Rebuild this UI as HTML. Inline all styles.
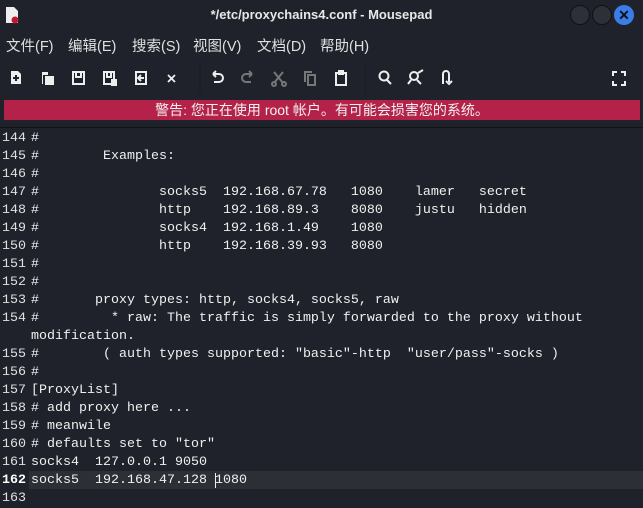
<!DOCTYPE html>
<html><head><meta charset="utf-8"><style>
*{margin:0;padding:0;box-sizing:border-box}
body{width:643px;height:508px;background:#1f222a;overflow:hidden;position:relative;font-family:"Liberation Sans","Noto Sans CJK SC",sans-serif;color:#e6e6e6}
.title{position:absolute;top:0;left:0;width:643px;height:30px;text-align:center;line-height:29px;font-size:13px;font-weight:bold;color:#e8e8e8}
.menu span{position:absolute;top:35px;font-size:14.5px;color:#e0e0e0}
.tb{position:absolute;top:60px;left:0;width:643px;height:36px}
.banner{position:absolute;top:100px;left:4px;width:636px;height:20px;background:#b42249;color:#f2f2f2;font-size:14px;text-align:center;line-height:20px}
.ed{position:absolute;top:127px;left:0;width:643px;height:381px;border-top:1px solid #101216;font-family:"Liberation Mono",monospace;font-size:13.33px}
.l{position:absolute;left:0;height:18px;line-height:19px;white-space:pre;width:643px}
.n{position:absolute;left:2px;color:#e0e0e0}
.t{position:absolute;left:31px;color:#f0f0f0}
.cur{background:#2c2f35;left:29px}
</style></head><body>
<div class="title">*/etc/proxychains4.conf - Mousepad</div>
<svg style="position:absolute;left:4px;top:6px" width="16" height="18"><path d="M2 1h8l4 4v12H2z" fill="#eee"/><circle cx="11" cy="14" r="3.5" fill="#c0182c"/></svg>
<div style="position:absolute;left:570px;top:5px;width:20px;height:20px;border-radius:50%;background:#2d3038;border:1px solid #111"></div>
<div style="position:absolute;left:592px;top:5px;width:20px;height:20px;border-radius:50%;background:#2d3038;border:1px solid #111"></div>
<div style="position:absolute;left:614px;top:5px;width:20px;height:20px;border-radius:50%;background:#3b7de8;color:#111;font-weight:bold;font-size:14px;text-align:center;line-height:20px">✕</div>
<div class="menu"><span style="left:6px">文件(F)</span><span style="left:68px">编辑(E)</span><span style="left:132px">搜索(S)</span><span style="left:193px">视图(V)</span><span style="left:257px">文档(D)</span><span style="left:320px">帮助(H)</span></div>
<svg class="tb" width="643" height="36" fill="none" stroke="#eee" stroke-width="2">
<path d="M11 11h7l3 3v10H11z" fill="#eee" stroke="none"/><path d="M16 15v6M13 18h6" stroke="#1f222a"/>
<path d="M42 12h6v3h-5v9h-1z" fill="#eee" stroke="none"/><rect x="45" y="16" width="9" height="9" fill="#eee" stroke="none"/>
<rect x="73" y="12" width="11" height="12"/><path d="M76 13v4h5v-4"/>
<rect x="104" y="12" width="10" height="12"/><path d="M107 13v4h4v-4"/><rect x="111" y="19" width="6" height="7" fill="#eee" stroke="none"/>
<rect x="136" y="12" width="10" height="12"/><path d="M144 18h-5M141 15l-3 3 3 3"/>
<path d="M168 15l7 7M175 15l-7 7" stroke-width="1.8"/>
<path d="M213 14h6a4 4 0 010 8h-5M213 14l3-3M213 14l3 3"/>
<path d="M252 14h-6a4 4 0 000 8h5M252 14l-3-3M252 14l-3 3" stroke="#777"/>
<path d="M274 12l9 11M283 12l-9 11" stroke="#777"/><circle cx="274" cy="24" r="2" stroke="#777"/><circle cx="284" cy="24" r="2" stroke="#777"/>
<rect x="308" y="15" width="7" height="10" stroke="#777"/><path d="M305 22v-10h7" stroke="#777"/>
<rect x="336" y="13" width="10" height="12"/><rect x="339" y="11" width="4" height="3" fill="#eee"/>
<circle cx="384" cy="16" r="4.5"/><path d="M387 20l4 4"/>
<circle cx="414" cy="16" r="4"/><path d="M411 20l-3 4M418 13l5-3M417 20l4 4"/>
<path d="M443 24v-10a3 3 0 016 0v8M446 21l3 3 3-3"/>
<path d="M613 16v-4h4M621 12h4v4M625 21v4h-4M617 25h-4v-4"/>
<path d="M200 4v30M365 4v30" stroke="#1a1c22" stroke-width="1"/>
</svg>
<div class="banner">警告: 您正在使用 root 帐户。有可能会损害您的系统。</div>
<div class="ed">
<div class="l cur" style="top:343px"></div>
<div class="l" style="top:1px"><span class="n">144</span><span class="t">#</span></div>
<div class="l" style="top:19px"><span class="n">145</span><span class="t">#        Examples:</span></div>
<div class="l" style="top:37px"><span class="n">146</span><span class="t">#</span></div>
<div class="l" style="top:55px"><span class="n">147</span><span class="t">#               socks5  192.168.67.78   1080    lamer   secret</span></div>
<div class="l" style="top:73px"><span class="n">148</span><span class="t">#               http    192.168.89.3    8080    justu   hidden</span></div>
<div class="l" style="top:91px"><span class="n">149</span><span class="t">#               socks4  192.168.1.49    1080</span></div>
<div class="l" style="top:109px"><span class="n">150</span><span class="t">#               http    192.168.39.93   8080</span></div>
<div class="l" style="top:127px"><span class="n">151</span><span class="t">#</span></div>
<div class="l" style="top:145px"><span class="n">152</span><span class="t">#</span></div>
<div class="l" style="top:163px"><span class="n">153</span><span class="t">#       proxy types: http, socks4, socks5, raw</span></div>
<div class="l" style="top:181px"><span class="n">154</span><span class="t">#         * raw: The traffic is simply forwarded to the proxy without</span></div>
<div class="l" style="top:199px"><span class="t">modification.</span></div>
<div class="l" style="top:217px"><span class="n">155</span><span class="t">#        ( auth types supported: "basic"-http  "user/pass"-socks )</span></div>
<div class="l" style="top:235px"><span class="n">156</span><span class="t">#</span></div>
<div class="l" style="top:253px"><span class="n">157</span><span class="t">[ProxyList]</span></div>
<div class="l" style="top:271px"><span class="n">158</span><span class="t"># add proxy here ...</span></div>
<div class="l" style="top:289px"><span class="n">159</span><span class="t"># meanwile</span></div>
<div class="l" style="top:307px"><span class="n">160</span><span class="t"># defaults set to "tor"</span></div>
<div class="l" style="top:325px"><span class="n">161</span><span class="t">socks4  127.0.0.1 9050</span></div>
<div class="l" style="top:343px"><span class="n" style="font-weight:bold;color:#fff">162</span><span class="t">socks5  192.168.47.128 1080</span></div>
<div style="position:absolute;left:215px;top:345px;width:1px;height:15px;background:#eee"></div>
<div class="l" style="top:361px"><span class="n">163</span></div>
</div>
</body></html>
